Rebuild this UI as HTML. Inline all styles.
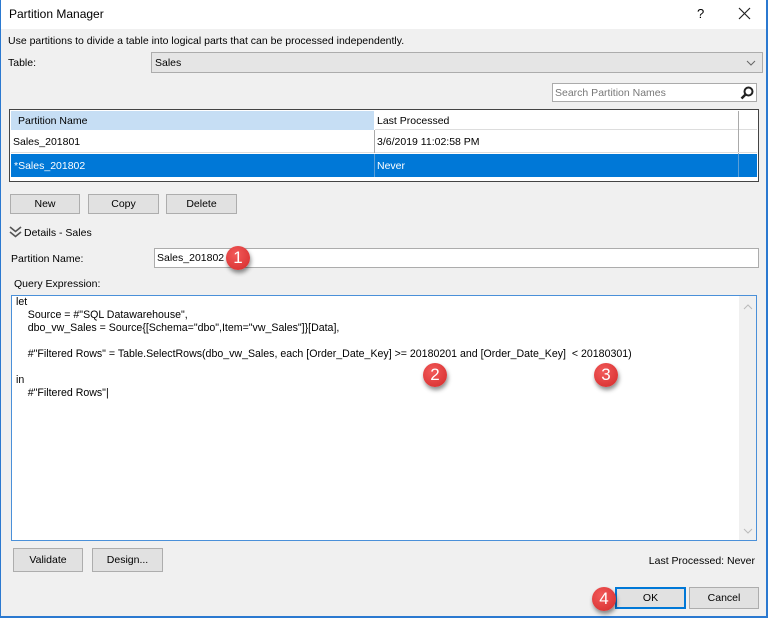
<!DOCTYPE html>
<html><head><style>
*{margin:0;padding:0;box-sizing:border-box}
body{width:768px;height:618px;background:#f0f0f0;font-family:"Liberation Sans",sans-serif;font-size:10.5px;color:#000;position:relative;overflow:hidden}
.a{position:absolute;white-space:nowrap}
.btn{position:absolute;background:#e1e1e1;border:1px solid #adadad;text-align:center;font-size:10.5px}
.badge{position:absolute;width:24px;height:24px;border-radius:50%;background:radial-gradient(circle at 40% 35%,#f25a5a,#d42a2a);color:#fff;font-size:17px;text-align:center;line-height:24px;box-shadow:1px 3px 4px rgba(0,0,0,.45)}
</style></head><body>
<div class="a" style="left:0;top:0;width:768px;height:29px;background:#fff"></div>
<div class="a" style="left:0;top:0;width:1px;height:618px;background:#2b79d0"></div>
<div class="a" style="right:0;top:0;width:2px;height:618px;background:#2b79d0"></div>
<div class="a" style="left:0;bottom:0;width:768px;height:2px;background:#2b79d0"></div>
<div class="a" style="left:9px;top:7px;font-size:12px">Partition Manager</div>
<div class="a" style="left:697px;top:6px;font-size:13px">?</div>
<svg class="a" style="left:738px;top:7px" width="13" height="13"><path d="M1 1L12 12M12 1L1 12" stroke="#222" stroke-width="1.2"/></svg>
<div class="a" style="left:8px;top:35px">Use partitions to divide a table into logical parts that can be processed independently.</div>
<div class="a" style="left:8px;top:57px">Table:</div>
<div class="a" style="left:151px;top:52px;width:612px;height:21px;background:#e5e5e5;border:1px solid #acacac;padding:4px 0 0 3px">Sales<svg style="position:absolute;right:6px;top:7px" width="10" height="6"><path d="M1 1L5 5L9 1" fill="none" stroke="#666"/></svg></div>
<div class="a" style="left:552px;top:83px;width:205px;height:19px;background:#fff;border:1px solid #ababab;color:#777;padding:3px 0 0 2px">Search Partition Names</div>
<svg class="a" style="left:740px;top:86px" width="14" height="14"><circle cx="8.5" cy="5.5" r="4" fill="none" stroke="#222" stroke-width="2"/><line x1="5.5" y1="8.5" x2="1.5" y2="12.5" stroke="#222" stroke-width="2.5"/></svg>
<div class="a" style="left:9px;top:109px;width:750px;height:73px;background:#fff;border:1px solid #444"></div>
<div class="a" style="left:11px;top:111px;width:363px;height:19px;background:#c6def4;padding:4px 0 0 7px">Partition Name</div>
<div class="a" style="left:375px;top:111px;width:382px;height:19px;background:#fff;border-bottom:1px solid #ddd;padding:4px 0 0 2px">Last Processed</div>
<div class="a" style="left:738px;top:111px;width:1px;height:66px;background:#aaa"></div>
<div class="a" style="left:11px;top:130px;width:746px;height:23px;border-bottom:1px solid #ddd"></div>
<div class="a" style="left:374px;top:130px;width:1px;height:23px;background:#aaa"></div>
<div class="a" style="left:13px;top:136px">Sales_201801</div>
<div class="a" style="left:377px;top:136px">3/6/2019 11:02:58 PM</div>
<div class="a" style="left:11px;top:154px;width:746px;height:23px;background:#0078d7"></div>
<div class="a" style="left:374px;top:154px;width:1px;height:23px;background:#5a9fd8"></div>
<div class="a" style="left:738px;top:154px;width:1px;height:23px;background:#5a9fd8"></div>
<div class="a" style="left:14px;top:160px;color:#fff">*Sales_201802</div>
<div class="a" style="left:377px;top:160px;color:#fff">Never</div>
<div class="btn" style="left:10px;top:194px;width:70px;height:20px;line-height:18px">New</div>
<div class="btn" style="left:88px;top:194px;width:71px;height:20px;line-height:18px">Copy</div>
<div class="btn" style="left:166px;top:194px;width:71px;height:20px;line-height:18px">Delete</div>
<svg class="a" style="left:9px;top:226px" width="13" height="12"><path d="M1 1L6.5 5.5L12 1M1 6L6.5 10.5L12 6" fill="none" stroke="#555" stroke-width="1.6"/></svg>
<div class="a" style="left:24px;top:227px">Details - Sales</div>
<div class="a" style="left:11px;top:253px">Partition Name:</div>
<div class="a" style="left:154px;top:248px;width:605px;height:20px;background:#fff;border:1px solid #acacac;padding:3px 0 0 2px">Sales_201802</div>
<div class="a" style="left:14px;top:278px">Query Expression:</div>
<div class="a" style="left:11px;top:295px;width:746px;height:246px;background:#fff;border:1px solid #4a90d9"></div>
<div class="a" style="left:739px;top:296px;width:17px;height:244px;background:#f0f0f0"></div>
<svg class="a" style="left:743px;top:304px" width="10" height="6"><path d="M1 5L5 1L9 5" fill="none" stroke="#bbb"/></svg>
<svg class="a" style="left:743px;top:528px" width="10" height="6"><path d="M1 1L5 5L9 1" fill="none" stroke="#bbb"/></svg>
<div class="a" style="left:16px;top:296px;line-height:13px;white-space:pre;font-size:10.6px">let
    Source = #"SQL Datawarehouse",
    dbo_vw_Sales = Source{[Schema="dbo",Item="vw_Sales"]}[Data],

    #"Filtered Rows" = Table.SelectRows(dbo_vw_Sales, each [Order_Date_Key] &gt;= 20180201 and [Order_Date_Key]  &lt; 20180301)

in
    #"Filtered Rows"|</div>
<div class="btn" style="left:13px;top:548px;width:70px;height:24px;line-height:22px">Validate</div>
<div class="btn" style="left:92px;top:548px;width:71px;height:24px;line-height:22px">Design...</div>
<div class="a" style="right:13px;top:555px">Last Processed: Never</div>
<div class="btn" style="left:615px;top:587px;width:71px;height:22px;line-height:19px;border:2px solid #0078d7">OK</div>
<div class="btn" style="left:689px;top:587px;width:70px;height:22px;line-height:20px">Cancel</div>
<div class="badge" style="left:226px;top:246px">1</div>
<div class="badge" style="left:423px;top:363px">2</div>
<div class="badge" style="left:594px;top:363px">3</div>
<div class="badge" style="left:592px;top:587px">4</div>
</body></html>
